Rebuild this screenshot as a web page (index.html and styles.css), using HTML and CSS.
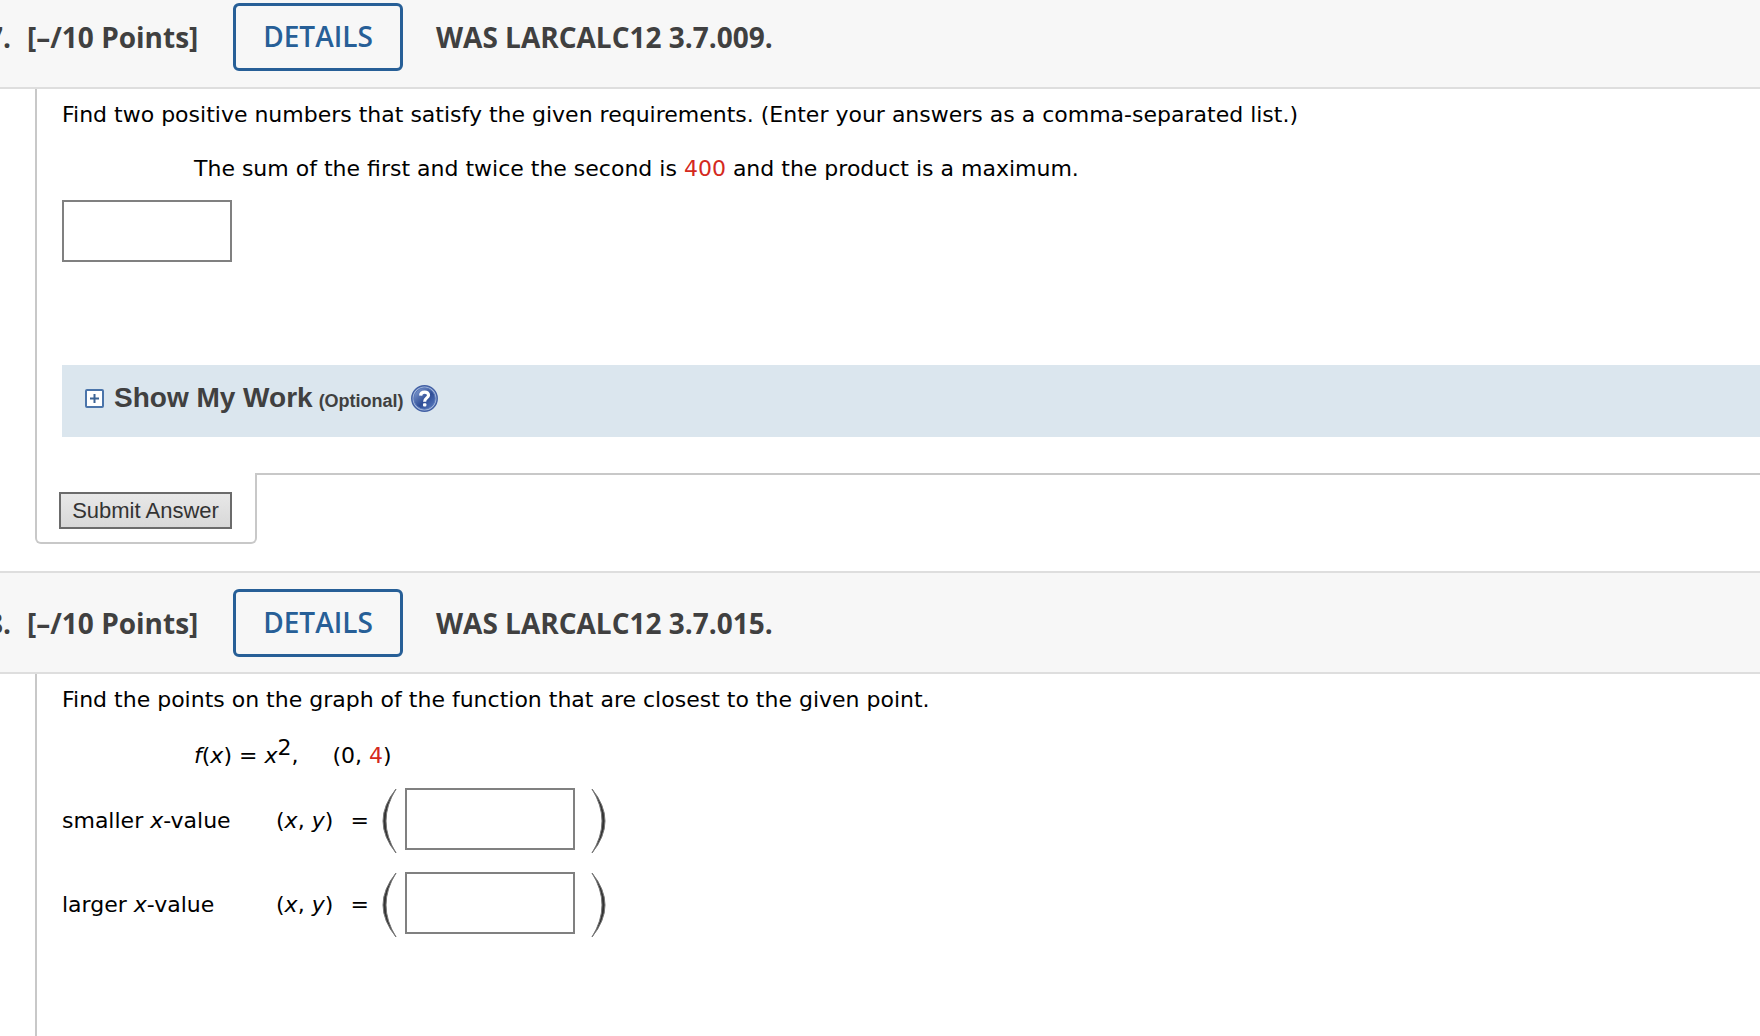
FILE: index.html
```html
<!DOCTYPE html>
<html lang="en">
<head>
<meta charset="utf-8">
<title>Assignment questions</title>
<link rel="stylesheet" href="styles.css">
</head>
<body>
<main>
  <section class="question">
    <header class="question-header first">
      <span class="number">7.</span>
      <span class="points">[–/10 Points]</span>
      <button type="button" class="details">DETAILS</button>
      <h2 class="source">WAS LARCALC12 3.7.009.</h2>
    </header>
    <div class="question-body">
      <p><label for="numbers">Find two positive numbers that satisfy the given requirements. (Enter your answers as a comma-separated list.)</label></p>
      <p class="indent">The sum of the first and twice the second is <span class="value">400</span> and the product is a maximum.</p>
      <input class="answer" id="numbers" type="text">
      <div class="work">
        <svg class="expand" width="19" height="19" viewBox="0 0 19 19" aria-hidden="true">
          <rect x="1" y="1" width="17" height="17" rx="1" fill="#fff" stroke="#4a74aa" stroke-width="2"/>
          <path d="M5 9.5h9M9.500 5v9" stroke="#3c6496" stroke-width="2"/>
        </svg>
        <h3 class="work-title">Show My Work <small>(Optional)</small></h3>
        <svg class="help" width="27" height="27" viewBox="0 0 27 27" role="img" aria-label="Help">
          <defs><linearGradient id="ball" x1="0" y1="0" x2="1" y2="1"><stop offset="0" stop-color="#8ba6d8"/><stop offset=".55" stop-color="#2f4d96"/><stop offset="1" stop-color="#5c7ec4"/></linearGradient></defs>
          <circle cx="13.500" cy="13.500" r="12.700" fill="#a5b8dc" stroke="#4361a5" stroke-width="1.500"/>
          <circle cx="13.500" cy="13.500" r="10.700" fill="url(#ball)" stroke="#5877b8" stroke-width="1"/>
          <path d="M9.600 10.600C9.900 5.900 17.700 6 17.500 10.300C17.300 13 13.600 13 13.600 16.800" fill="none" stroke="#fff" stroke-width="3.200"/>
          <rect x="12" y="18.200" width="3.400" height="3.400" rx="1" fill="#fff"/>
        </svg>
      </div>
    </div>
    <div class="question-footer">
      <div class="submit-tab"><button type="button" class="submit">Submit Answer</button></div>
      <div class="footer-line"></div>
    </div>
  </section>

  <section class="question">
    <header class="question-header">
      <span class="number">8.</span>
      <span class="points">[–/10 Points]</span>
      <button type="button" class="details">DETAILS</button>
      <h2 class="source">WAS LARCALC12 3.7.015.</h2>
    </header>
    <div class="question-body open">
      <p>Find the points on the graph of the function that are closest to the given point.</p>
      <p class="indent formula"><span><i>f</i>(<i>x</i>) = <i>x</i><sup>2</sup>,</span><span>(0, <span class="value">4</span>)</span></p>
      <div class="pairs">
        <div class="pair">
          <label for="smaller">smaller <i>x</i>-value</label>
          <span class="lhs"><span>(<i>x</i>, <i>y</i>)</span><span>=</span></span>
          <svg width="16" height="66" viewBox="0 0 16 66" aria-hidden="true"><path d="M15 1Q-11 33 15 65Q-5 33 15 1Z" fill="#333" stroke="#777"/></svg>
          <input class="answer" id="smaller" type="text">
          <svg width="16" height="66" viewBox="0 0 16 66" aria-hidden="true"><path d="M1 1Q27 33 1 65Q21 33 1 1Z" fill="#333" stroke="#777"/></svg>
        </div>
        <div class="pair">
          <label for="larger">larger <i>x</i>-value</label>
          <span class="lhs"><span>(<i>x</i>, <i>y</i>)</span><span>=</span></span>
          <svg width="16" height="66" viewBox="0 0 16 66" aria-hidden="true"><path d="M15 1Q-11 33 15 65Q-5 33 15 1Z" fill="#333" stroke="#777"/></svg>
          <input class="answer" id="larger" type="text">
          <svg width="16" height="66" viewBox="0 0 16 66" aria-hidden="true"><path d="M1 1Q27 33 1 65Q21 33 1 1Z" fill="#333" stroke="#777"/></svg>
        </div>
      </div>
    </div>
  </section>
</main>
</body>
</html>
```
FILE: styles.css
```css
* { box-sizing: border-box; }

body {
  margin: 0;
  background: #fff;
  color: #000;
  font: 22px/28px Verdana, "DejaVu Sans", sans-serif;
}

main {
  display: flex;
  flex-direction: column;
  min-height: 100vh;
}

.question:last-child {
  display: flex;
  flex-direction: column;
  flex: 1;
}

h2, h3, p { margin: 0; }

.question-header {
  display: flex;
  align-items: center;
  padding: 16px 0 15px;
  border-top: 2px solid #dedede;
  border-bottom: 2px solid #dedede;
  background: #f7f7f7;
  color: #404040;
  font: bold 28px/38px "Open Sans", sans-serif;
}

.question-header.first {
  padding: 3px 0 16px;
  border-top: 0;
}

.number {
  display: flex;
  justify-content: flex-end;
  width: 11px;
  margin-right: 16px;
  overflow: hidden;
}

.points { width: 206px; }

.details {
  width: 170px;
  height: 68px;
  margin-right: 33px;
  padding: 0 0 2px;
  border: 3px solid #275f97;
  border-radius: 6px;
  background: transparent;
  color: #275f97;
  font: 600 28px/38px "Open Sans", sans-serif;
}

.source { font-size: 28px; }

.question-body {
  display: flex;
  flex-direction: column;
  align-items: flex-start;
  margin-left: 35px;
  padding: 12px 0 36px 25px;
  border-left: 2px solid #c8c8c8;
}

.question-body.open { flex: 1; }

.indent {
  margin-top: 26px;
  padding-left: 132px;
}

.value { color: #d42a1e; }

.answer {
  width: 170px;
  height: 62px;
  padding: 4px 8px;
  border: 2px solid #808080;
  border-radius: 0;
  background: #fff;
  font: inherit;
}

#numbers { margin-top: 17px; }

.work {
  display: flex;
  align-items: center;
  align-self: stretch;
  height: 72px;
  margin-top: 103px;
  padding: 0 23px 6px;
  background: #dbe6ee;
  color: #404040;
}

.work-title {
  display: flex;
  align-items: baseline;
  gap: 6px;
  margin: 0 7px 0 10px;
  padding-top: 3px;
  font: bold 28px/32px Arial, "Liberation Sans", sans-serif;
}

.work-title small { font-size: 18px; }

.question-footer {
  display: flex;
  margin: 0 0 27px 35px;
}

.submit-tab {
  width: 222px;
  padding: 19px 0 13px 22px;
  border: solid #c8c8c8;
  border-width: 0 2px 2px;
  border-radius: 0 0 6px 6px;
}

.submit {
  display: block;
  width: 173px;
  height: 37px;
  padding: 0;
  border: 2px solid #6b6b6b;
  background: linear-gradient(#e8e8e8, #d8d8d8);
  color: #333;
  font: 22px/26px Arial, "Liberation Sans", sans-serif;
}

.footer-line {
  flex: 1;
  border-top: 2px solid #c8c8c8;
}

.formula {
  display: flex;
  gap: 34px;
  margin-top: 28px;
}

sup {
  font-size: 22px;
  line-height: 0;
  vertical-align: 8px;
}

.pairs {
  display: grid;
  gap: 18px;
  margin-top: 18px;
}

.pair {
  display: flex;
  align-items: center;
  height: 66px;
}

.pair label { width: 214px; }

.lhs {
  display: flex;
  justify-content: space-between;
  width: 93px;
  margin-right: 12px;
}

.pair .answer {
  align-self: flex-start;
  margin: 0 16px 0 8px;
}
```
